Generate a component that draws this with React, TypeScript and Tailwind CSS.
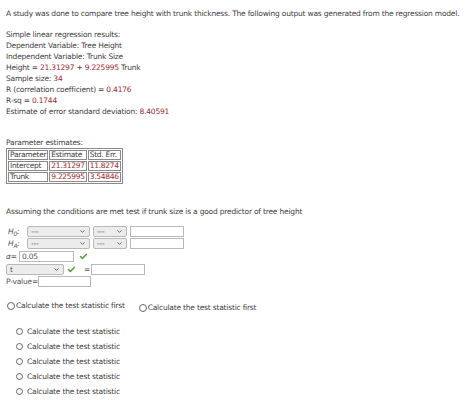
import { Check, ChevronDown } from "lucide-react";

const red = "text-[#9b2a2f]";
const cell = "border border-[#8a8a8a] px-[1px] leading-[7px] pb-[1px]";

function Select({ width, label }: { width: string; label: string }) {
  return (
    <div
      className={`${width} h-[11px] flex items-center justify-between rounded-[2px] border border-[#b8b8b8] bg-[#ececec] pl-[3px] pr-[3px]`}
    >
      <span className="leading-none">{label}</span>
      <ChevronDown className="w-[7px] h-[7px] text-[#555]" strokeWidth={3} />
    </div>
  );
}

function Field({ width }: { width: string }) {
  return <div className={`${width} h-[11px] border border-[#b8b8b8] bg-white`} />;
}

function Radio({ label }: { label: string }) {
  return (
    <div className="flex items-center gap-[1px]">
      <span className="w-[8px] h-[8px] rounded-full border border-[#666] bg-white" />
      <span>{label}</span>
    </div>
  );
}

function Tick() {
  return <Check className="w-[9px] h-[9px] text-[#5c9a3e]" strokeWidth={4} />;
}

export default function App() {
  const results: [string, string][] = [
    ["Sample size: ", "34"],
    ["R (correlation coefficient) = ", "0.4176"],
    ["R-sq = ", "0.1744"],
    ["Estimate of error standard deviation: ", "8.40591"],
  ];

  return (
    <div className="w-[474px] h-[400px] overflow-hidden bg-white text-[#3d3d3d] text-[7.5px] tracking-[-0.2px] leading-[11px] font-['DejaVu_Sans',sans-serif] px-[6px] pt-[8px]">
      <p className="whitespace-nowrap">
        A study was done to compare tree height with trunk thickness. The following output was generated from the
        regression model.
      </p>

      <div className="mt-[10px]">
        <p>Simple linear regression results:</p>
        <p>Dependent Variable: Tree Height</p>
        <p>Independent Variable: Trunk Size</p>
        <p>
          Height = <span className={red}>21.31297</span> + <span className={red}>9.225995</span> Trunk
        </p>
        {results.map(([k, v]) => (
          <p key={k}>
            {k}
            <span className={red}>{v}</span>
          </p>
        ))}
      </div>

      <div className="mt-[20px]">
        <p>Parameter estimates:</p>
        <table className="border border-[#8a8a8a] border-separate border-spacing-[1px] tracking-[-0.3px]">
          <tbody>
            <tr>
              <td className={cell}>Parameter</td>
              <td className={cell}>Estimate</td>
              <td className={cell}>Std. Err.</td>
            </tr>
            <tr>
              <td className={cell}>Intercept</td>
              <td className={`${cell} ${red}`}>21.31297</td>
              <td className={`${cell} ${red}`}>11.8274</td>
            </tr>
            <tr>
              <td className={cell}>Trunk</td>
              <td className={`${cell} ${red}`}>9.225995</td>
              <td className={`${cell} ${red}`}>3.54846</td>
            </tr>
          </tbody>
        </table>
      </div>

      <p className="mt-[22px]">Assuming the conditions are met test if trunk size is a good predictor of tree height</p>

      <div className="mt-[9px] flex flex-col gap-[2px] text-[#555]">
        <div className="flex items-center gap-[3px] pl-[2px]">
          <span className="w-[16px] italic">
            H<sub className="text-[6px]">0</sub>:
          </span>
          <Select width="w-[63px]" label="---" />
          <Select width="w-[34px]" label="---" />
          <Field width="w-[54px]" />
        </div>
        <div className="flex items-center gap-[3px] pl-[2px] -mt-[1px]">
          <span className="w-[16px] italic">
            H<sub className="text-[6px]">A</sub>:
          </span>
          <Select width="w-[63px]" label="---" />
          <Select width="w-[34px]" label="---" />
          <Field width="w-[54px]" />
        </div>
        <div className="flex items-center">
          <span className="w-[13px]">
            <i>α</i>=
          </span>
          <div className="w-[55px] h-[11px] border border-[#b8b8b8] bg-white pl-[2px] leading-[9px]">0.05</div>
          <span className="ml-[5px]">
            <Tick />
          </span>
        </div>
        <div className="flex items-center">
          <Select width="w-[58px]" label="t" />
          <span className="ml-[3px]">
            <Tick />
          </span>
          <span className="ml-[8px]">=</span>
          <span className="ml-[1px]">
            <Field width="w-[54px]" />
          </span>
        </div>
        <div className="flex items-center -mt-[1px]">
          <span>P-value=</span>
          <Field width="w-[53px]" />
        </div>
      </div>

      <div className="mt-[13px] flex items-start">
        <div className="pl-[1px]">
          <Radio label="Calculate the test statistic first" />
        </div>
        <div className="ml-[14px] mt-[2px]">
          <Radio label="Calculate the test statistic first" />
        </div>
      </div>

      <div className="mt-[13px] pl-[10px] flex flex-col gap-[4px]">
        {[0, 1, 2, 3, 4].map((i) => (
          <div key={i} className="flex items-center gap-[4px]">
            <span className="w-[7px] h-[7px] rounded-full border border-[#666] bg-white" />
            <span>Calculate the test statistic</span>
          </div>
        ))}
      </div>
    </div>
  );
}
